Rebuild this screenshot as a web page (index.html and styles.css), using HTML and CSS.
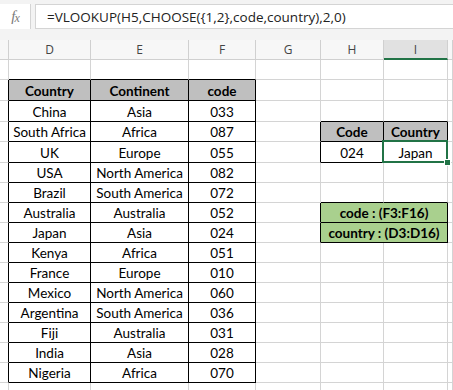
FILE: index.html
```html
<!DOCTYPE html>
<html>
<head>
<meta charset="utf-8">
<link rel="stylesheet" href="styles.css">
</head>
<body>
<div class="fbar">
  <div class="fx">f<span class="x">x</span></div>
  <div class="formula">=VLOOKUP(H5,CHOOSE({1,2},code,country),2,0)</div>
</div>
<table class="sheet">
  <colgroup>
    <col class="cC"><col class="cD"><col class="cE"><col class="cF"><col class="cG"><col class="cH"><col class="cI"><col class="cJ">
  </colgroup>
  <thead>
    <tr class="colhdr">
      <th></th><th>D</th><th>E</th><th>F</th><th>G</th><th>H</th><th class="selcol">I</th><th></th>
    </tr>
  </thead>
  <tbody>
    <tr class="r20">
      <td></td><td class="tt"></td><td class="tt"></td><td class="tt"></td><td></td><td></td><td></td><td></td>
    </tr>
    <tr class="r21">
      <td class="tl"></td><td class="t h">Country</td><td class="t h">Continent</td><td class="t h">code</td><td></td><td></td><td></td><td></td>
    </tr>
    <tr class="r21">
      <td class="tl"></td><td class="t">China</td><td class="t">Asia</td><td class="t">033</td><td></td><td class="tt"></td><td class="tt"></td><td></td>
    </tr>
    <tr class="r20">
      <td class="tl"></td><td class="t">South Africa</td><td class="t">Africa</td><td class="t">087</td><td class="tl"></td><td class="t h">Code</td><td class="t h">Country</td><td></td>
    </tr>
    <tr class="r21">
      <td class="tl"></td><td class="t">UK</td><td class="t">Europe</td><td class="t">055</td><td class="tl"></td><td class="t">024</td><td class="t sel">Japan</td><td></td>
    </tr>
    <tr class="r20">
      <td class="tl"></td><td class="t">USA</td><td class="t">North America</td><td class="t">082</td><td></td><td></td><td></td><td></td>
    </tr>
    <tr class="r20">
      <td class="tl"></td><td class="t">Brazil</td><td class="t">South America</td><td class="t">072</td><td></td><td class="tt"></td><td class="tt"></td><td></td>
    </tr>
    <tr class="r20">
      <td class="tl"></td><td class="t">Australia</td><td class="t">Australia</td><td class="t">052</td><td class="tl"></td><td class="t g" colspan="2">code : (F3:F16)</td><td></td>
    </tr>
    <tr class="r20">
      <td class="tl"></td><td class="t">Japan</td><td class="t">Asia</td><td class="t">024</td><td class="tl"></td><td class="t g" colspan="2">country : (D3:D16)</td><td></td>
    </tr>
    <tr class="r20">
      <td class="tl"></td><td class="t">Kenya</td><td class="t">Africa</td><td class="t">051</td><td></td><td></td><td></td><td></td>
    </tr>
    <tr class="r20">
      <td class="tl"></td><td class="t">France</td><td class="t">Europe</td><td class="t">010</td><td></td><td></td><td></td><td></td>
    </tr>
    <tr class="r20">
      <td class="tl"></td><td class="t">Mexico</td><td class="t">North America</td><td class="t">060</td><td></td><td></td><td></td><td></td>
    </tr>
    <tr class="r20">
      <td class="tl"></td><td class="t">Argentina</td><td class="t">South America</td><td class="t">036</td><td></td><td></td><td></td><td></td>
    </tr>
    <tr class="r20">
      <td class="tl"></td><td class="t">Fiji</td><td class="t">Australia</td><td class="t">031</td><td></td><td></td><td></td><td></td>
    </tr>
    <tr class="r20">
      <td class="tl"></td><td class="t">India</td><td class="t">Asia</td><td class="t">028</td><td></td><td></td><td></td><td></td>
    </tr>
    <tr class="r20">
      <td class="tl"></td><td class="t">Nigeria</td><td class="t">Africa</td><td class="t">070</td><td></td><td></td><td></td><td></td>
    </tr>
    <tr class="r20">
      <td></td><td></td><td></td><td></td><td></td><td></td><td></td><td></td>
    </tr>
  </tbody>
</table>
</body>
</html>
```

FILE: styles.css
```css
html, body {
  margin: 0;
  padding: 0;
  background: #ffffff;
  overflow: hidden;
}

.fbar {
  display: flex;
  height: 40px;
  box-sizing: border-box;
  padding: 4px 0 11px 0;
  background: #f3f3f3;
}

.fx {
  width: 31px;
  box-sizing: border-box;
  background: #ffffff;
  border-right: 1px solid #d4d4d4;
  font-family: "Liberation Serif", serif;
  font-style: italic;
  font-size: 15px;
  color: #7a7a7a;
  display: flex;
  align-items: center;
  justify-content: center;
  letter-spacing: -1px;
}

.fx .x {
  font-size: 12px;
  padding-top: 3px;
}

.formula {
  flex: 1;
  margin-left: 4px;
  background: #ffffff;
  border: 1px solid #d4d4d4;
  border-right: none;
  display: flex;
  align-items: center;
  padding-left: 11px;
  font-family: "Open Sans", sans-serif;
  font-size: 13.5px;
  color: #222222;
}

.sheet {
  border-collapse: separate;
  border-spacing: 0;
  table-layout: fixed;
  width: 453px;
  font-family: Lato, sans-serif;
  font-size: 13.5px;
  color: #000000;
}

.cC { width: 9px; }
.cD { width: 82px; }
.cE { width: 98px; }
.cF { width: 67px; }
.cG { width: 65px; }
.cH { width: 63px; }
.cI { width: 64px; }
.cJ { width: 5px; }

.sheet th,
.sheet td {
  padding: 0;
  box-sizing: border-box;
  border-right: 1px solid #d4d4d4;
  border-bottom: 1px solid #d4d4d4;
  text-align: center;
  vertical-align: middle;
  white-space: nowrap;
  overflow: hidden;
}

.sheet td {
  padding-top: 1px;
}

.colhdr {
  height: 20px;
}

.colhdr th {
  background: #f7f7f7;
  font-family: "Open Sans", sans-serif;
  font-weight: normal;
  font-size: 12px;
  color: #444444;
  border-right-color: #d0d0d0;
  border-bottom-color: #d0d0d0;
}

.colhdr th.selcol {
  background: #e1e1e1;
  border-bottom: 2px solid #217346;
}

.r20 { height: 20px; }
.r21 { height: 21px; }

.sheet td.t {
  border-right-color: #000000;
  border-bottom-color: #000000;
}

.sheet td.tl {
  border-right-color: #000000;
}

.sheet td.tt {
  border-bottom-color: #000000;
}

.sheet td.h {
  background: #bfbfbf;
  font-weight: bold;
}

.sheet td.g {
  background: #a9d08e;
  font-weight: bold;
}

.sheet td.sel {
  position: relative;
  overflow: visible;
}

.sheet td.sel::after {
  content: "";
  position: absolute;
  left: -2px;
  top: -2px;
  right: -1px;
  bottom: -1px;
  border: 2px solid #217346;
}

.sheet td.sel::before {
  content: "";
  position: absolute;
  right: -4px;
  bottom: -4px;
  width: 5px;
  height: 5px;
  background: #217346;
  border: 1px solid #ffffff;
  z-index: 2;
}
```
